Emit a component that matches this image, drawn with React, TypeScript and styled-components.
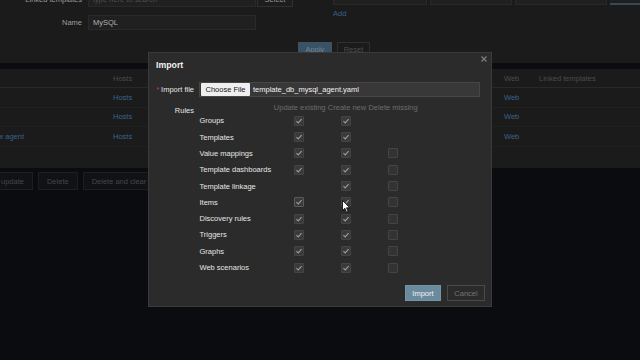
import styled, { createGlobalStyle } from "styled-components";

const GlobalStyle = createGlobalStyle`
  html, body {
    margin: 0;
    padding: 0;
    background: #0b0c0f;
  }
  body {
    font-family: "Liberation Sans", Arial, sans-serif;
    font-size: 7.5px;
  }
  * {
    box-sizing: border-box;
  }
`;

type Rule = {
  name: string;
  update: boolean | null;
  create: boolean | null;
  remove: boolean | null;
  focus?: boolean;
};

const rules: Rule[] = [
  { name: "Groups", update: true, create: true, remove: null },
  { name: "Templates", update: true, create: true, remove: null },
  { name: "Value mappings", update: true, create: true, remove: false },
  { name: "Template dashboards", update: true, create: true, remove: false },
  { name: "Template linkage", update: null, create: true, remove: false },
  { name: "Items", update: true, create: true, remove: false, focus: true },
  { name: "Discovery rules", update: true, create: true, remove: false },
  { name: "Triggers", update: true, create: true, remove: false },
  { name: "Graphs", update: true, create: true, remove: false },
  { name: "Web scenarios", update: true, create: true, remove: false },
];

export default function App() {
  return (
    <Screen>
      <GlobalStyle />

      <FilterPanel>
        <FilterColumns>
          <FilterForm>
            <FormRow>
              <FormLabel>Linked templates</FormLabel>
              <TextBox $placeholder>type here to search</TextBox>
              <SelectButton>Select</SelectButton>
            </FormRow>
            <FormRow>
              <FormLabel>Name</FormLabel>
              <TextBox>MySQL</TextBox>
            </FormRow>
          </FilterForm>
          <TagForm>
            <TagRow>
              <TagInput $w={94} />
              <TagInput $w={82} />
              <TagInput $w={92} />
              <TagRemove />
            </TagRow>
            <AddLink>Add</AddLink>
          </TagForm>
        </FilterColumns>
        <FilterButtons>
          <ApplyButton>Apply</ApplyButton>
          <ResetButton>Reset</ResetButton>
        </FilterButtons>
      </FilterPanel>

      <TablePanel>
        <TableRow $header>
          <span />
          <HeadCell>Hosts</HeadCell>
          <HeadCell>Web</HeadCell>
          <HeadCell>Linked templates</HeadCell>
        </TableRow>
        {["", "", "Template DB MySQL by Zabbix agent"].map((name, i) => (
          <TableRow key={i}>
            <NameClip>
              <DimLink>{name}</DimLink>
            </NameClip>
            <DimLink>Hosts</DimLink>
            <DimLink>Web</DimLink>
            <span />
          </TableRow>
        ))}
      </TablePanel>

      <ActionBar>
        <ActionButton $shift={-28}>Mass update</ActionButton>
        <ActionButton>Delete</ActionButton>
        <ActionButton>Delete and clear</ActionButton>
      </ActionBar>

      <Dialog>
        <DialogHeader>
          <DialogTitle>Import</DialogTitle>
          <CloseIcon width="6" height="6" viewBox="0 0 6 6">
            <path d="M0.5 0.5 L5.5 5.5 M5.5 0.5 L0.5 5.5" stroke="#7c7c7c" strokeWidth="1.3" />
          </CloseIcon>
        </DialogHeader>

        <DialogForm>
          <FieldLabel>
            <Asterisk>*</Asterisk>Import file
          </FieldLabel>
          <FileBox>
            <ChooseButton>Choose File</ChooseButton>
            <FileName>template_db_mysql_agent.yaml</FileName>
          </FileBox>

          <FieldLabel $top={2.7}>Rules</FieldLabel>
          <RulesTable>
            <span />
            <ColHead>Update existing</ColHead>
            <ColHead>Create new</ColHead>
            <ColHead>Delete missing</ColHead>
            {rules.map((r) => (
              <RuleRow key={r.name}>
                <RuleName>{r.name}</RuleName>
                <BoxCell>{r.update !== null && <Check checked={r.update} focus={r.focus} />}</BoxCell>
                <BoxCell>{r.create !== null && <Check checked={r.create} />}</BoxCell>
                <BoxCell>{r.remove !== null && <Check checked={r.remove} />}</BoxCell>
              </RuleRow>
            ))}
          </RulesTable>
        </DialogForm>

        <DialogFooter>
          <PrimaryButton>Import</PrimaryButton>
          <CancelButton>Cancel</CancelButton>
        </DialogFooter>
      </Dialog>

      <Cursor width="9" height="13" viewBox="0 0 9 13">
        <path d="M0.5 0.5 L0.5 10.5 L2.9 8.3 L4.6 12.2 L6.1 11.5 L4.5 7.8 L7.8 7.8 Z" fill="#fff" stroke="#000" strokeWidth="0.8" />
      </Cursor>
    </Screen>
  );
}

function Check({ checked, focus }: { checked: boolean; focus?: boolean }) {
  return (
    <CheckBox $checked={checked} $focus={focus}>
      {checked && (
        <svg width="10" height="10" viewBox="0 0 10 10">
          <polyline points="2.4,5.2 4.2,6.9 7.6,3.2" fill="none" stroke="#9d9d9d" strokeWidth="1.1" />
        </svg>
      )}
    </CheckBox>
  );
}

const Screen = styled.div`
  position: relative;
  width: 640px;
  height: 360px;
  overflow: hidden;
  background: #0b0c0f;
`;

/* background page (dimmed by the modal) */

const FilterPanel = styled.section`
  margin-top: -12px;
  height: 75px;
  padding-top: 4px;
  background: #1b1b1b;
`;

const FilterColumns = styled.div`
  display: flex;
`;

const FilterForm = styled.div`
  width: 338px;
  display: flex;
  flex-direction: column;
  gap: 8px;
`;

const FormRow = styled.div`
  display: flex;
  align-items: center;
  height: 15px;
`;

const FormLabel = styled.label`
  width: 82px;
  margin-right: 6px;
  text-align: right;
  color: #9c9c9c;
`;

const TextBox = styled.div<{ $placeholder?: boolean }>`
  width: 168px;
  height: 15px;
  padding: 0 4px;
  display: flex;
  align-items: center;
  background: #202020;
  border: 1px solid #292929;
  color: ${({ $placeholder }) => ($placeholder ? "#4e4e4e" : "#b3b3b3")};
`;

const SelectButton = styled.div`
  width: 36px;
  height: 15px;
  margin-left: 1px;
  display: flex;
  align-items: center;
  justify-content: center;
  background: #1d1d1d;
  border: 1px solid #303030;
  color: #9a9a9a;
`;

const TagForm = styled.div`
  display: flex;
  flex-direction: column;
`;

const TagRow = styled.div`
  display: flex;
  gap: 3px;
`;

const TagInput = styled.div<{ $w: number }>`
  width: ${({ $w }) => $w}px;
  height: 13px;
  background: #202020;
  border: 1px solid #292929;
`;

const TagRemove = styled.div`
  width: 30px;
  height: 13px;
  background: #1f1f1f;
  border-bottom: 2px solid #34495a;
`;

const AddLink = styled.span`
  margin-top: 3.5px;
  line-height: 9px;
  color: #35608a;
`;

const FilterButtons = styled.div`
  display: flex;
  gap: 5px;
  margin-top: 12px;
  padding-left: 298px;
`;

const ApplyButton = styled.div`
  width: 34px;
  height: 15px;
  display: flex;
  align-items: center;
  justify-content: center;
  background: #3a5264;
  color: #6e8799;
`;

const ResetButton = styled.div`
  width: 33px;
  height: 15px;
  display: flex;
  align-items: center;
  justify-content: center;
  border: 1px solid #2f2f2f;
  color: #4e4e4e;
`;

const TablePanel = styled.section`
  margin-top: 6px;
  height: 99px;
  background: #1b1b1b;
`;

const TableRow = styled.div<{ $header?: boolean }>`
  display: grid;
  grid-template-columns: 113px 391px 35px 1fr;
  align-items: center;
  height: ${({ $header }) => ($header ? 19 : 19.6)}px;
  border-bottom: 1px solid ${({ $header }) => ($header ? "#282828" : "#202020")};
`;

const HeadCell = styled.span`
  color: #4c4c4c;
`;

const DimLink = styled.span`
  color: #38648c;
  white-space: nowrap;
`;

const NameClip = styled.div`
  width: 24px;
  display: flex;
  justify-content: flex-end;
  overflow: hidden;
`;

const ActionBar = styled.div`
  display: flex;
  gap: 5px;
  margin-top: 4px;
`;

const ActionButton = styled.div<{ $shift?: number }>`
  height: 18px;
  padding: 0 8px;
  margin-left: ${({ $shift }) => $shift ?? 0}px;
  display: flex;
  align-items: center;
  white-space: nowrap;
  background: #111215;
  border: 1px solid #1d1e21;
  color: #464646;
`;

/* modal */

const Dialog = styled.div`
  position: absolute;
  left: 148px;
  top: 52px;
  width: 344px;
  height: 255px;
  display: flex;
  flex-direction: column;
  background: #2b2b2b;
  border: 1px solid #3b3b3b;
`;

const DialogHeader = styled.div`
  display: flex;
  justify-content: space-between;
  padding: 7px 4px 0 7px;
`;

const DialogTitle = styled.h4`
  margin: 0;
  font-size: 8.75px;
  line-height: 10px;
  font-weight: bold;
  color: #f0f0f0;
`;

const CloseIcon = styled.svg`
  margin-top: -4px;
`;

const DialogForm = styled.div`
  display: grid;
  grid-template-columns: 45px 281px;
  column-gap: 5px;
  row-gap: 6px;
  margin-top: 12px;
  align-items: start;
`;

const FieldLabel = styled.label<{ $top?: number }>`
  padding-top: ${({ $top }) => $top ?? 0}px;
  line-height: ${({ $top }) => ($top ? "9px" : "15px")};
  text-align: right;
  white-space: nowrap;
  color: #e6e6e6;
`;

const Asterisk = styled.span`
  margin-right: 2px;
  color: #b04848;
`;

const FileBox = styled.div`
  height: 15px;
  display: flex;
  align-items: center;
  gap: 3px;
  padding-left: 1px;
  background: #383838;
  border: 1px solid #464646;
`;

const ChooseButton = styled.div`
  width: 49px;
  height: 13px;
  display: flex;
  align-items: center;
  justify-content: center;
  background: #efefef;
  border-radius: 1px;
  color: #151515;
`;

const FileName = styled.span`
  color: #f2f2f2;
`;

const RulesTable = styled.div`
  display: grid;
  grid-template-columns: 72px max-content max-content max-content;
  grid-template-rows: 9.7px;
  grid-auto-rows: 16.3px;
  column-gap: 2.3px;
  align-items: center;
  margin-left: 0.5px;
`;

const ColHead = styled.span`
  white-space: nowrap;
  color: #6c6c6c;
`;

const RuleRow = styled.div`
  display: contents;
`;

const RuleName = styled.span`
  white-space: nowrap;
  color: #e6e6e6;
`;

const BoxCell = styled.div`
  justify-self: center;
  display: flex;
  margin-left: -1px;
`;

const CheckBox = styled.span<{ $checked: boolean; $focus?: boolean }>`
  width: 10px;
  height: 10px;
  display: flex;
  background: ${({ $checked }) => ($checked ? "#3a3a3a" : "#333333")};
  border: 1px solid ${({ $focus }) => ($focus ? "#5a5a5a" : "#444444")};
  border-radius: 1px;

  & > svg {
    margin: -1px;
  }
`;

const DialogFooter = styled.div`
  margin-top: auto;
  display: flex;
  justify-content: flex-end;
  gap: 6px;
  padding: 0 6px 5px 0;
`;

const PrimaryButton = styled.div`
  width: 36px;
  height: 16px;
  display: flex;
  align-items: center;
  justify-content: center;
  background: #6a8b9d;
  border: 1px solid #7394a6;
  color: #f2f2f2;
`;

const CancelButton = styled.div`
  width: 38px;
  height: 16px;
  display: flex;
  align-items: center;
  justify-content: center;
  border: 1px solid #494949;
  color: #737373;
`;

const Cursor = styled.svg`
  position: absolute;
  left: 341.5px;
  top: 199.5px;
`;
